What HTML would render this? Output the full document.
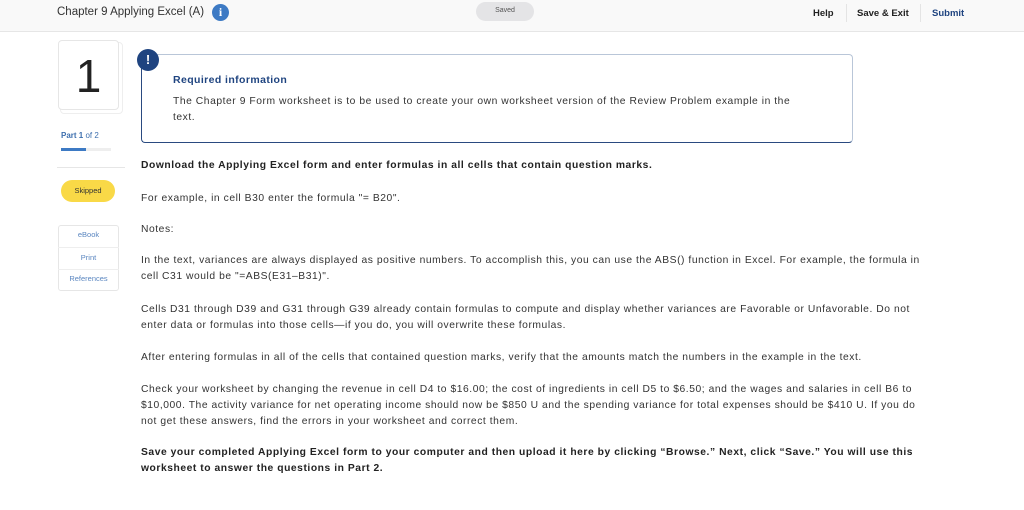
<!DOCTYPE html>
<html><head><meta charset="utf-8"><style>
*{margin:0;padding:0;box-sizing:border-box}
body{width:1024px;height:510px;background:#fff;font-family:"Liberation Sans",sans-serif;color:#222;position:relative;overflow:hidden}
.hdr{position:absolute;left:0;top:0;width:1024px;height:32px;background:#f9f9f9;border-bottom:1px solid #e6e6e6}
.abs{position:absolute;white-space:nowrap}
p.t{position:absolute;left:141px;font-size:10.3px;line-height:16px;color:#333;width:785px;letter-spacing:0.55px}
b{color:#222;letter-spacing:0.55px}
</style></head><body>
<div class="hdr"></div>
<div class="abs" style="left:57px;top:6px;font-size:11.5px;color:#333">Chapter 9 Applying Excel (A)</div>
<div class="abs" style="left:212px;top:4px;width:17px;height:17px;border-radius:50%;background:#3d7ac4;color:#fff;font-size:12px;font-weight:bold;text-align:center;line-height:17px;font-family:'Liberation Serif',serif">i</div>
<div class="abs" style="left:476px;top:2px;width:58px;height:19px;border-radius:10px;background:#e4e4e6;font-size:7px;color:#555;text-align:center;line-height:18px">Saved</div>
<div class="abs" style="left:813px;top:8px;font-size:9.5px;font-weight:bold;color:#222">Help</div>
<div class="abs" style="left:846px;top:4px;width:1px;height:18px;background:#e4e4e4"></div>
<div class="abs" style="left:857px;top:8px;font-size:9.5px;font-weight:bold;color:#222">Save &amp; Exit</div>
<div class="abs" style="left:920px;top:4px;width:1px;height:18px;background:#e4e4e4"></div>
<div class="abs" style="left:932px;top:8px;font-size:9.5px;font-weight:bold;color:#1f4480">Submit</div>

<div class="abs" style="left:60px;top:42px;width:63px;height:72px;border:1px solid #eee;border-radius:4px"></div>
<div class="abs" style="left:58px;top:40px;width:61px;height:70px;border:1px solid #e6e6e6;border-radius:4px;background:#fff;font-size:46px;text-align:center;line-height:70px;color:#222">1</div>
<div class="abs" style="left:61px;top:131px;font-size:8px;color:#3d6fae"><b style="color:#3d6fae;letter-spacing:0">Part 1</b> of 2</div>
<div class="abs" style="left:61px;top:148px;width:50px;height:3px;background:#eee"></div>
<div class="abs" style="left:61px;top:148px;width:25px;height:3px;background:#3d7ac4"></div>
<div class="abs" style="left:57px;top:167px;width:68px;height:1px;background:#e6e6e6"></div>
<div class="abs" style="left:61px;top:180px;width:54px;height:22px;border-radius:11px;background:#f9d947;font-size:7.5px;text-align:center;line-height:22px;color:#333">Skipped</div>
<div class="abs" style="left:58px;top:225px;width:61px;height:66px;border:1px solid #e6e6e6;border-radius:3px"></div>
<div class="abs" style="left:58px;top:247px;width:61px;height:1px;background:#eee"></div>
<div class="abs" style="left:58px;top:269px;width:61px;height:1px;background:#eee"></div>
<div class="abs" style="left:58px;top:230px;width:61px;text-align:center;font-size:7.5px;color:#5a86c0">eBook</div>
<div class="abs" style="left:58px;top:253px;width:61px;text-align:center;font-size:7.5px;color:#5a86c0">Print</div>
<div class="abs" style="left:58px;top:274px;width:61px;text-align:center;font-size:7.5px;color:#5a86c0">References</div>

<div class="abs" style="left:141px;top:54px;width:712px;height:89px;border:1px solid #b9c6d8;border-bottom:1.5px solid #2a4a80;border-left:1.5px solid #2a4a80;border-radius:4px"></div>
<div class="abs" style="left:137px;top:49px;width:22px;height:22px;border-radius:50%;background:#1f4480;color:#fff;font-weight:bold;font-size:13px;text-align:center;line-height:22px">!</div>
<div class="abs" style="left:173px;top:74px;font-size:10.5px;font-weight:bold;color:#1f4480;letter-spacing:0.4px">Required information</div>
<p class="t" style="left:173px;top:94px;width:640px">The Chapter 9 Form worksheet is to be used to create your own worksheet version of the Review Problem example in the text.</p>

<p class="t" style="top:158px"><b>Download the Applying Excel form and enter formulas in all cells that contain question marks.</b></p>
<p class="t" style="top:191px">For example, in cell B30 enter the formula "= B20".</p>
<p class="t" style="top:222px">Notes:</p>
<p class="t" style="top:253px">In the text, variances are always displayed as positive numbers. To accomplish this, you can use the ABS() function in Excel. For example, the formula in cell C31 would be "=ABS(E31–B31)".</p>
<p class="t" style="top:302px">Cells D31 through D39 and G31 through G39 already contain formulas to compute and display whether variances are Favorable or Unfavorable. Do not enter data or formulas into those cells—if you do, you will overwrite these formulas.</p>
<p class="t" style="top:350px">After entering formulas in all of the cells that contained question marks, verify that the amounts match the numbers in the example in the text.</p>
<p class="t" style="top:382px">Check your worksheet by changing the revenue in cell D4 to $16.00; the cost of ingredients in cell D5 to $6.50; and the wages and salaries in cell B6 to $10,000. The activity variance for net operating income should now be $850 U and the spending variance for total expenses should be $410 U. If you do not get these answers, find the errors in your worksheet and correct them.</p>
<p class="t" style="top:445px;width:780px"><b>Save your completed Applying Excel form to your computer and then upload it here by clicking “Browse.” Next, click “Save.” You will use this worksheet to answer the questions in Part 2.</b></p>
</body></html>
